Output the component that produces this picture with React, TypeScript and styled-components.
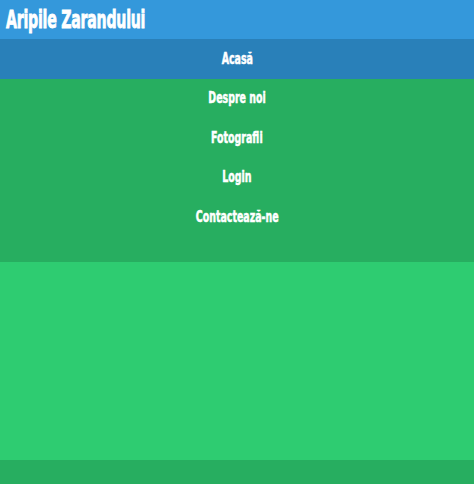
import styled, { createGlobalStyle } from "styled-components";

const GlobalStyle = createGlobalStyle`
  html, body {
    margin: 0;
    padding: 0;
    background: #27ae60;
    font-family: "DejaVu Sans Condensed", "DejaVu Sans", sans-serif;
  }
`;

const links = ["Acasă", "Despre noi", "Fotografii", "Login", "Contactează-ne"];

const App = () => {
  return (
    <Page>
      <GlobalStyle />
      <Header>
        <Title>Aripile Zarandului</Title>
      </Header>
      <Nav>
        <ul>
          {links.map((el, i) => (
            <NavItem key={el} $active={i === 0}>
              <a href="#">{el}</a>
            </NavItem>
          ))}
        </ul>
      </Nav>
      <Main />
      <Footer />
    </Page>
  );
};

export default App;

const Page = styled.div`
  display: flex;
  flex-direction: column;
  min-height: 100vh;
`;

const Header = styled.header`
  background-color: #3498db;
  height: 39px;
  display: flex;
  align-items: center;
  padding: 0 6px;
  box-sizing: border-box;
`;

const Title = styled.h1`
  margin: 0;
  color: #fff;
  font-size: 25px;
  font-weight: 700;
  letter-spacing: -0.4px;
  display: inline-block;
  transform: scaleX(0.63);
  transform-origin: left center;
  white-space: nowrap;
  -webkit-text-stroke: 0.8px #fff;
`;

const Nav = styled.nav`
  background-color: #27ae60;
  padding-bottom: 25px;

  ul {
    list-style: none;
    margin: 0;
    padding: 0;
  }
`;

const NavItem = styled.li<{ $active?: boolean }>`
  height: 39.5px;
  display: flex;
  align-items: center;
  justify-content: center;
  background-color: ${(p) => (p.$active ? "#2980b9" : "transparent")};

  a {
    display: inline-block;
    color: #fff;
    text-decoration: none;
    font-size: 15px;
    font-weight: 700;
    transform: scaleX(0.7);
    white-space: nowrap;
    -webkit-text-stroke: 0.5px #fff;
  }
`;

const Main = styled.main`
  background-color: #2ecc71;
  height: 198px;
`;

const Footer = styled.footer`
  background-color: #27ae60;
  flex: 1;
`;
